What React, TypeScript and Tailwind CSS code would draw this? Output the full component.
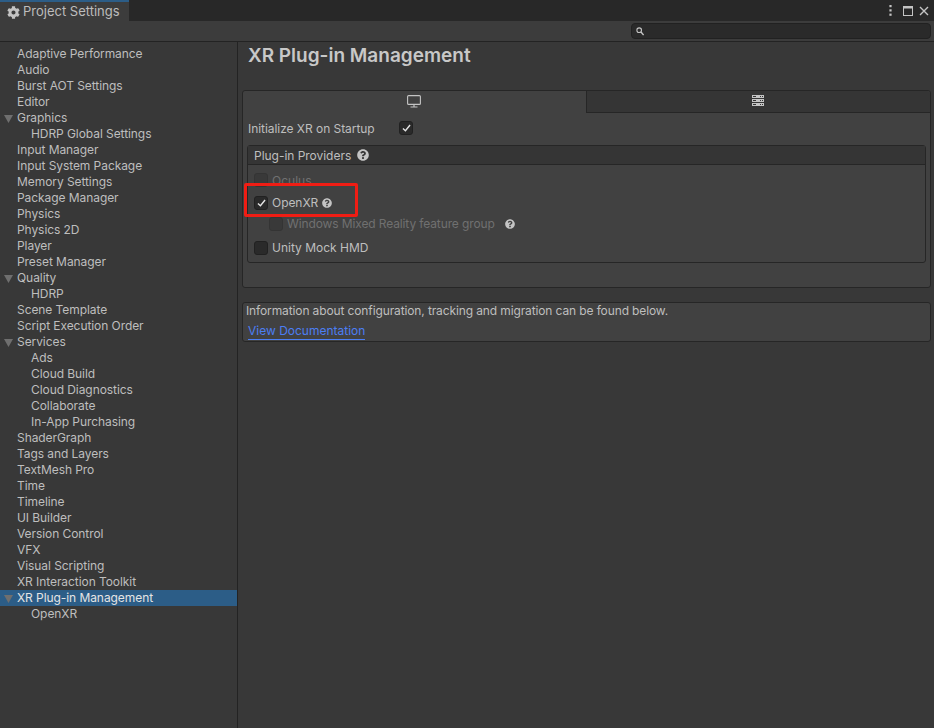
import React from "react";
import { FaCog, FaQuestionCircle } from "react-icons/fa";

const items: [string, number, boolean?, boolean?][] = [
  ["Adaptive Performance", 0],
  ["Audio", 0],
  ["Burst AOT Settings", 0],
  ["Editor", 0],
  ["Graphics", 0, true],
  ["HDRP Global Settings", 1],
  ["Input Manager", 0],
  ["Input System Package", 0],
  ["Memory Settings", 0],
  ["Package Manager", 0],
  ["Physics", 0],
  ["Physics 2D", 0],
  ["Player", 0],
  ["Preset Manager", 0],
  ["Quality", 0, true],
  ["HDRP", 1],
  ["Scene Template", 0],
  ["Script Execution Order", 0],
  ["Services", 0, true],
  ["Ads", 1],
  ["Cloud Build", 1],
  ["Cloud Diagnostics", 1],
  ["Collaborate", 1],
  ["In-App Purchasing", 1],
  ["ShaderGraph", 0],
  ["Tags and Layers", 0],
  ["TextMesh Pro", 0],
  ["Time", 0],
  ["Timeline", 0],
  ["UI Builder", 0],
  ["Version Control", 0],
  ["VFX", 0],
  ["Visual Scripting", 0],
  ["XR Interaction Toolkit", 0],
  ["XR Plug-in Management", 0, true, true],
  ["OpenXR", 1],
];

function Tri() {
  return (
    <svg width="9" height="8" viewBox="0 0 9 8" className="absolute left-[4px] top-[5px]">
      <polygon points="0,0 9,0 4.5,8" fill="#6f6f6f" />
    </svg>
  );
}

function Check({ checked, dim }: { checked?: boolean; dim?: boolean }) {
  return (
    <div
      className={
        "w-[14px] h-[14px] rounded-[3px] border flex items-center justify-center shrink-0 " +
        (dim ? "bg-[#393939] border-[#343434]" : "bg-[#2a2a2a] border-[#212121]")
      }
    >
      {checked && (
        <svg width="9" height="8" viewBox="0 0 10 9">
          <path d="M1 5 L3.8 7.5 L9 1.2" fill="none" stroke="#e4e4e4" strokeWidth="1.6" />
        </svg>
      )}
    </div>
  );
}

export default function App() {
  return (
    <div className="w-[934px] h-[728px] overflow-hidden flex flex-col bg-[#383838] text-[12px] text-[#bebebe] font-['Inter','Liberation_Sans',sans-serif]">
      {/* Tab bar */}
      <div className="h-[21px] bg-[#282828] flex items-stretch justify-between shrink-0">
        <div className="w-[129px] bg-[#3c3c3c] border-t-2 border-[#2c5d87] flex items-center pl-[7px] pt-[1px] gap-[3px] text-[13px] text-[#bdbdbd]">
          <FaCog size={13} className="text-[#c4c4c4]" />
          <span>Project Settings</span>
        </div>
        <div className="flex items-center pr-[5px]">
          <svg width="3" height="11" viewBox="0 0 3 11">
            <rect x="0.4" y="0" width="2.2" height="2.2" fill="#c4c4c4" />
            <rect x="0.4" y="4.3" width="2.2" height="2.2" fill="#c4c4c4" />
            <rect x="0.4" y="8.6" width="2.2" height="2.2" fill="#c4c4c4" />
          </svg>
          <svg width="10" height="10" viewBox="0 0 10 10" className="ml-[11px]">
            <rect x="0.5" y="0.5" width="9" height="9" fill="none" stroke="#c4c4c4" />
            <rect x="0" y="0" width="10" height="2.5" fill="#c4c4c4" />
          </svg>
          <svg width="10" height="10" viewBox="0 0 10 10" className="ml-[6px]">
            <path d="M1 1 L9 9 M9 1 L1 9" stroke="#c4c4c4" strokeWidth="1.4" />
          </svg>
        </div>
      </div>
      {/* Toolbar */}
      <div className="h-[21px] bg-[#3c3c3c] border-b border-[#232323] flex items-center justify-end pr-[3px] shrink-0">
        <div className="w-[300px] h-[16px] rounded-[4px] bg-[#2a2a2a] border border-[#212121] flex items-center pl-[4px]">
          <svg width="8" height="9" viewBox="0 0 8 9">
            <circle cx="3.2" cy="3.2" r="2.3" fill="none" stroke="#c4c4c4" strokeWidth="1.1" />
            <path d="M5 5 L7.6 8" stroke="#c4c4c4" strokeWidth="1.4" />
          </svg>
        </div>
      </div>
      <div className="flex flex-1 min-h-0">
        {/* Sidebar */}
        <div className="w-[238px] shrink-0 border-r border-[#232323] pt-[4px] leading-[16px] tracking-[-0.07px]">
          {items.map(([label, lvl, tri, sel]) => (
            <div
              key={label}
              className={
                "relative h-[16px] whitespace-nowrap " +
                (lvl ? "pl-[31px] " : "pl-[17px] ") +
                (sel ? "bg-[#2c5d87] text-[#e4e4e4]" : "")
              }
            >
              {tri && <Tri />}
              {label}
            </div>
          ))}
        </div>
        {/* Main */}
        <div className="flex-1 min-w-0 pl-[4px] pr-[3px]">
          <div className="pl-[6px] h-[48px] pt-[1px] text-[19px] leading-[26px] font-semibold text-[#c8c8c8]">
            XR Plug-in Management
          </div>
          <div className="h-[198px] bg-[#414141] border border-[#262626] rounded-[3px]">
            <div className="flex h-[22px]">
              <div className="w-[343px] flex items-center justify-center pb-[2px] pr-[2px]">
                <svg width="14" height="13" viewBox="0 0 14 13">
                  <rect x="0.6" y="0.6" width="12.8" height="8.8" rx="1" fill="none" stroke="#c4c4c4" strokeWidth="1.1" />
                  <path d="M7 9.5 V11.5 M3.5 12 H10.5" stroke="#c4c4c4" strokeWidth="1.2" />
                </svg>
              </div>
              <div className="flex-1 bg-[#353535] border-b border-l border-[#262626] rounded-tr-[3px] flex items-center justify-center pb-[2px] pr-[2px]">
                <svg width="12" height="11" viewBox="0 0 12 11">
                  <rect width="12" height="3" y="0" fill="#c4c4c4" />
                  <rect width="12" height="3" y="4" fill="#c4c4c4" />
                  <rect width="12" height="3" y="8" fill="#c4c4c4" />
                  <path d="M1 1.5H4M1 5.5H4M1 9.5H4" stroke="#353535" />
                  <path d="M8 1.5H9M10 1.5H11M8 5.5H9M10 5.5H11M8 9.5H9M10 9.5H11" stroke="#353535" />
                </svg>
              </div>
            </div>
            <div className="flex items-center h-[16px] mt-[7px] pl-[5px]">
              <span className="w-[151px] shrink-0 pt-[2px] tracking-[-0.05px]">Initialize XR on Startup</span>
              <Check checked />
            </div>
            <div className="relative mx-[4px] mt-[9px] h-[118px] border border-[#262626] rounded-[3px]">
              <div className="h-[19px] bg-[#353535] border-b border-[#262626] flex items-center pl-[6px] gap-[6px]">
                <span className="pt-[2px] tracking-[-0.03px]">Plug-in Providers</span>
                <FaQuestionCircle size={12} className="text-[#c4c4c4]" />
              </div>
              <div className="flex items-center h-[16px] mt-[7px] pl-[6px] gap-[4px] text-[#707070]">
                <Check dim />
                <span className="pt-[2px]">Oculus</span>
              </div>
              <div className="flex items-center h-[16px] mt-[7px] pl-[6px] gap-[4px]">
                <Check checked />
                <span className="tracking-[-0.05px]">OpenXR</span>
                <FaQuestionCircle size={10} className="text-[#c4c4c4]" />
              </div>
              <div className="flex items-center h-[16px] mt-[5px] pl-[21px] gap-[4px] text-[#707070]">
                <Check dim />
                <span className="tracking-[-0.12px]">Windows Mixed Reality feature group</span>
                <FaQuestionCircle size={10} className="text-[#c4c4c4] ml-[6px]" />
              </div>
              <div className="flex items-center h-[16px] mt-[8px] pl-[6px] gap-[4px]">
                <Check />
                <span>Unity Mock HMD</span>
              </div>
              {/* highlight annotation */}
              <div className="absolute left-[-4px] top-[37px] w-[114px] h-[34px] border-[3px] border-[#f01d14] rounded-[2px]" />
            </div>
          </div>
          <div className="mt-[14px] h-[40px] bg-[#414141] border border-[#262626] rounded-[3px] pl-[3px]">
            <div className="h-[18px] leading-[16px] tracking-[-0.12px]">
              Information about configuration, tracking and migration can be found below.
            </div>
            <div className="mt-[2px] ml-[2px] w-fit leading-[15px] h-[17px] text-[#4c7ef3] border-b border-[#4c7ef3]">
              View Documentation
            </div>
          </div>
        </div>
      </div>
    </div>
  );
}
